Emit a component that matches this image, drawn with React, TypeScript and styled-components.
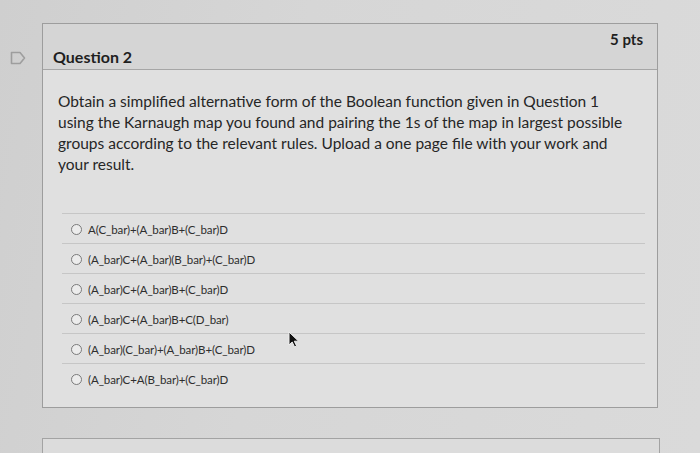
import React from 'react'
import styled, { createGlobalStyle } from 'styled-components'

const GlobalStyle = createGlobalStyle`
  html, body {
    margin: 0;
    padding: 0;
    background: #d3d3d3;
    font-family: Lato, "Open Sans", "Liberation Sans", sans-serif;
    overflow: hidden;
  }
`

const promptLines = [
  'Obtain a simplified alternative form of the Boolean function given in Question 1',
  'using the Karnaugh map you found and pairing the 1s of the map in largest possible',
  'groups according to the relevant rules. Upload a one page file with your work and',
  'your result.',
]

const options = [
  'A(C_bar)+(A_bar)B+(C_bar)D',
  '(A_bar)C+(A_bar)(B_bar)+(C_bar)D',
  '(A_bar)C+(A_bar)B+(C_bar)D',
  '(A_bar)C+(A_bar)B+C(D_bar)',
  '(A_bar)(C_bar)+(A_bar)B+(C_bar)D',
  '(A_bar)C+A(B_bar)+(C_bar)D',
]

const FlagIcon = () => (
  <svg width="16" height="14" viewBox="0 0 16 14" fill="none">
    <path d="M1.5 1.5 H10 L14.5 7 L10 12.5 H1.5 Z" stroke="#9e9e9e" strokeWidth="1.6" strokeLinejoin="round" />
  </svg>
)

const Cursor = () => (
  <svg width="12" height="17" viewBox="0 0 12 17">
    <path d="M1 1 L1 14 L4.2 11 L6.6 16 L8.6 15 L6.3 10.2 L10.6 10.2 Z" fill="#111" stroke="#eee" strokeWidth="1" strokeLinejoin="round" />
  </svg>
)

const App: React.FC = () => {
  return (
    <>
      <GlobalStyle />
      <PageWrap>
        <QuestionRow>
          <Gutter>
            <FlagIcon />
          </Gutter>
          <Card>
            <Header>
              <Title>Question 2</Title>
              <Points>5 pts</Points>
            </Header>
            <Body>
              <Prompt>
                {promptLines.map((l) => (
                  <PromptLine key={l}>{l}</PromptLine>
                ))}
              </Prompt>
              <Answers>
                {options.map((o) => (
                  <AnswerRow key={o}>
                    <Radio />
                    <AnswerText>{o}</AnswerText>
                  </AnswerRow>
                ))}
              </Answers>
            </Body>
          </Card>
        </QuestionRow>
        <QuestionRow>
          <Gutter />
          <NextCard />
        </QuestionRow>
        <CursorWrap>
          <Cursor />
        </CursorWrap>
      </PageWrap>
    </>
  )
}

const PageWrap = styled.div`
  position: relative;
  width: 700px;
  height: 453px;
  padding-top: 23px;
  box-sizing: border-box;
  display: flex;
  flex-direction: column;
  gap: 30px;
  overflow: hidden;
  background: linear-gradient(100deg, #cfcfcf 0%, #d6d6d6 40%, #dadada 100%);
`

const QuestionRow = styled.div`
  display: flex;
  align-items: flex-start;
`

const Gutter = styled.div`
  width: 42px;
  flex-shrink: 0;
  display: flex;
  justify-content: center;
  padding-top: 28px;
  padding-right: 6px;
  box-sizing: border-box;
`

const Card = styled.div`
  width: 616px;
  border: 1px solid #9d9d9d;
  background: #e0e0e0;
  box-sizing: border-box;
`

const Header = styled.div`
  height: 45px;
  display: flex;
  justify-content: space-between;
  align-items: flex-start;
  background: #d5d5d5;
  border-bottom: 1px solid #a6a6a6;
  padding: 0 14px 0 10px;
`

const Title = styled.div`
  padding-top: 23px;
  font-size: 16px;
  line-height: 20px;
  font-weight: 700;
  color: #1f1f1f;
`

const Points = styled.div`
  padding-top: 5px;
  font-size: 15px;
  line-height: 20px;
  font-weight: 700;
  color: #1f1f1f;
`

const Body = styled.div`
  padding: 21px 12px 14px 15px;
`

const Prompt = styled.div`
  margin: 0 0 38px;
  font-size: 15.5px;
  line-height: 21px;
  color: #262626;
`

const PromptLine = styled.div`
  white-space: nowrap;
`

const Answers = styled.div`
  margin-left: 4px;
`

const AnswerRow = styled.div`
  height: 30px;
  display: flex;
  align-items: center;
  gap: 6px;
  padding-left: 9px;
  padding-top: 2px;
  box-sizing: border-box;
  border-top: 1px solid #c6c6c6;
`

const Radio = styled.span`
  width: 9px;
  height: 9px;
  border-radius: 50%;
  border: 1px solid #7a7a7a;
  background: #ececec;
  flex-shrink: 0;
`

const AnswerText = styled.span`
  font-size: 11.5px;
  color: #2e2e2e;
  letter-spacing: -0.1px;
`

const NextCard = styled.div`
  width: 616px;
  height: 14px;
  border: 1px solid #a3a3a3;
  border-bottom: none;
  background: #dcdcdc;
`

const CursorWrap = styled.div`
  position: absolute;
  left: 288px;
  top: 331px;
`

export default App
